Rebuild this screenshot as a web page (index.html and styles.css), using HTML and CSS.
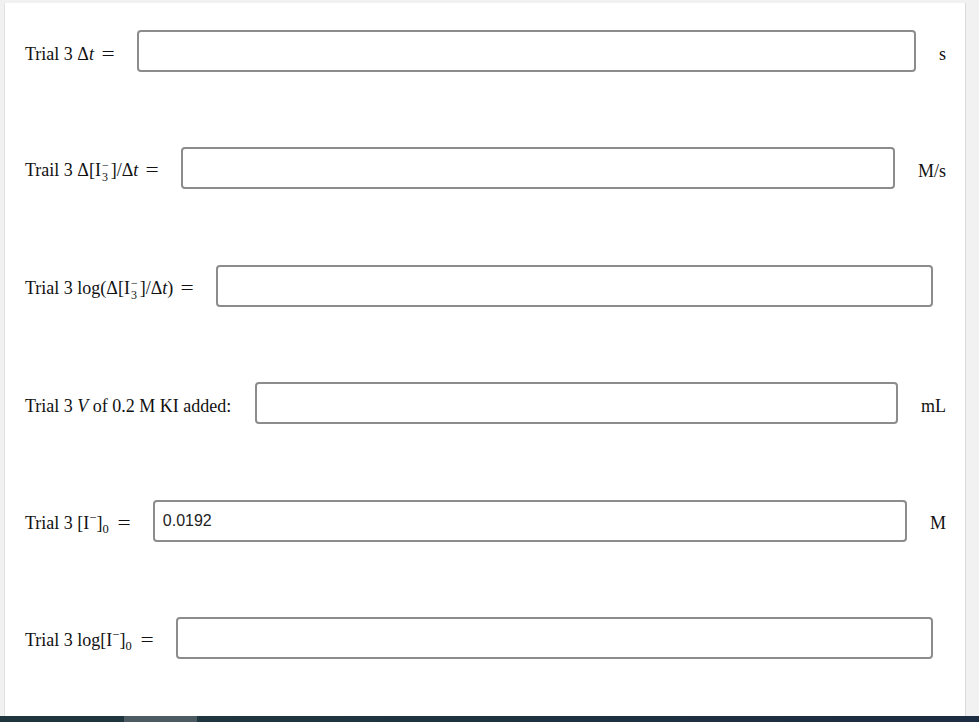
FILE: index.html
```html
<!DOCTYPE html>
<html>
<head>
<meta charset="utf-8">
<link rel="stylesheet" href="styles.css">
</head>
<body>
<div class="screen">
  <div class="main">
    <div class="panel">
      <div class="row">
        <span class="label">Trial 3 Δ<i>t</i><span class="eq">=</span></span>
        <input class="field" type="text">
        <span class="unit">s</span>
      </div>
      <div class="row">
        <span class="label">Trail 3 Δ[I<span class="supsub"><span>−</span><span>3</span></span>]/Δ<i>t</i><span class="eq">=</span></span>
        <input class="field" type="text">
        <span class="unit">M/s</span>
      </div>
      <div class="row">
        <span class="label">Trial 3 log(Δ[I<span class="supsub"><span>−</span><span>3</span></span>]/Δ<i>t</i>)<span class="eq">=</span></span>
        <input class="field nounit" type="text">
      </div>
      <div class="row">
        <span class="label">Trial 3 <i>V</i> of 0.2 M KI added:</span>
        <input class="field" type="text">
        <span class="unit">mL</span>
      </div>
      <div class="row">
        <span class="label">Trial 3 [I<sup class="sup">−</sup>]<sub class="sub">0</sub><span class="eq">=</span></span>
        <input class="field" type="text" value="0.0192">
        <span class="unit">M</span>
      </div>
      <div class="row">
        <span class="label">Trial 3 log[I<sup class="sup">−</sup>]<sub class="sub">0</sub><span class="eq">=</span></span>
        <input class="field nounit" type="text">
      </div>
    </div>
  </div>
  <div class="taskbar">
    <div class="seg-a"></div>
    <div class="seg-b"></div>
    <div class="seg-c"></div>
  </div>
</div>
</body>
</html>
```

FILE: styles.css
```css
html, body {
  margin: 0;
  padding: 0;
}
body {
  background: #f1f1f1;
  width: 979px;
  height: 722px;
  overflow: hidden;
  font-family: "Liberation Serif", "Times New Roman", serif;
  color: #111;
}
.screen {
  display: flex;
  flex-direction: column;
  height: 722px;
}
.main {
  flex: 1;
  display: flex;
  padding-top: 3px;
  padding-left: 4px;
  min-height: 0;
}
.panel {
  background: #fff;
  border-left: 1px solid #e2e2e2;
  border-right: 1px solid #dadada;
  padding: 27px 19px 0 20px;
  box-sizing: border-box;
  width: 962px;
  display: flex;
  flex-direction: column;
  gap: 75.4px;
}
.row {
  display: flex;
  align-items: center;
  height: 42px;
}
.label {
  font-size: 18px;
  white-space: nowrap;
  margin-right: 24px;
  padding-top: 6px;
}
.label i {
  font-style: italic;
}
.eq {
  display: inline-block;
  margin-left: 9px;
  margin-right: 0;
  transform: scaleX(1.3);
}
.field {
  flex: 1;
  min-width: 0;
  height: 42px;
  box-sizing: border-box;
  border: 2px solid #8c8c8c;
  border-radius: 4px;
  padding: 0 8px;
  font-family: "Liberation Sans", Arial, sans-serif;
  font-size: 16px;
  color: #222;
  background: #fff;
  outline: none;
}
.field.nounit {
  margin-right: 13px;
}
.unit {
  font-size: 18px;
  margin-left: 23px;
  white-space: nowrap;
  padding-top: 6px;
}
.supsub {
  display: inline-flex;
  flex-direction: column;
  font-size: 12px;
  line-height: 12px;
  vertical-align: 7px;
  margin: 0 2px 0 1px;
}
.sup {
  font-size: 12.5px;
  line-height: 0;
  vertical-align: 7px;
}
.sub {
  font-size: 12.5px;
  line-height: 0;
  vertical-align: -4px;
  margin-right: 1px;
}
.taskbar {
  height: 6px;
  display: flex;
  flex-shrink: 0;
}
.seg-a {
  width: 124px;
  background: #1f363e;
}
.seg-b {
  width: 73px;
  background: #4c5b62;
}
.seg-c {
  flex: 1;
  background: linear-gradient(to right, #1f363f, #1c2c42);
}
```
